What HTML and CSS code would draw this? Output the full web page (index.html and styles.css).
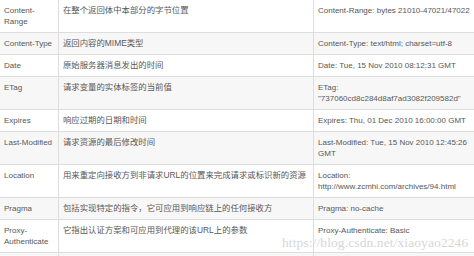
FILE: index.html
```html
<!DOCTYPE html>
<html lang="zh">
<head>
<meta charset="utf-8">
<link rel="stylesheet" href="styles.css">
</head>
<body>
<div class="table">
  <div class="row"><div class="c k">Content-Range</div><div class="c d">在整个返回体中本部分的字节位置</div><div class="c v">Content-Range: bytes 21010-47021/47022</div></div>
  <div class="row alt"><div class="c k">Content-Type</div><div class="c d">返回内容的MIME类型</div><div class="c v">Content-Type: text/html; charset=utf-8</div></div>
  <div class="row"><div class="c k">Date</div><div class="c d">原始服务器消息发出的时间</div><div class="c v">Date: Tue, 15 Nov 2010 08:12:31 GMT</div></div>
  <div class="row alt"><div class="c k">ETag</div><div class="c d">请求变量的实体标签的当前值</div><div class="c v">ETag: "737060cd8c284d8af7ad3082f209582d"</div></div>
  <div class="row"><div class="c k">Expires</div><div class="c d">响应过期的日期和时间</div><div class="c v">Expires: Thu, 01 Dec 2010 16:00:00 GMT</div></div>
  <div class="row alt"><div class="c k">Last-Modified</div><div class="c d">请求资源的最后修改时间</div><div class="c v">Last-Modified: Tue, 15 Nov 2010 12:45:26 GMT</div></div>
  <div class="row"><div class="c k">Location</div><div class="c d">用来重定向接收方到非请求URL的位置来完成请求或标识新的资源</div><div class="c v">Location: http://www.zcmhi.com/archives/94.html</div></div>
  <div class="row alt"><div class="c k">Pragma</div><div class="c d">包括实现特定的指令，它可应用到响应链上的任何接收方</div><div class="c v">Pragma: no-cache</div></div>
  <div class="row"><div class="c k">Proxy-Authenticate</div><div class="c d">它指出认证方案和可应用到代理的该URL上的参数</div><div class="c v">Proxy-Authenticate: Basic</div></div>
  <div class="row alt tail"><div class="c k"></div><div class="c d"></div><div class="c v"></div></div>
</div>
<div class="watermark">https://blog.csdn.net/xiaoyao2246</div>
</body>
</html>
```

FILE: styles.css
```css
html, body {
  margin: 0;
  padding: 0;
  background: #fff;
  overflow: hidden;
}
body {
  width: 474px;
  height: 256px;
  position: relative;
  font-family: "Liberation Sans", Arial, "Noto Sans CJK SC", sans-serif;
  font-size: 8px;
  line-height: 11px;
  color: #575757;
}
.table {
  display: flex;
  flex-direction: column;
}
.row {
  display: grid;
  grid-template-columns: 59px 255px 1fr;
  background: #fff;
}
.row.alt {
  background: #f7f7f7;
}
.c {
  padding: 5px 4px;
  border-bottom: 1px solid #dddddd;
  border-right: 1px solid #dddddd;
  min-width: 0;
  overflow-wrap: break-word;
}
.c.v {
  border-right: none;
}
.c.d {
  font-size: 8.4px;
}
.row.tail .c {
  padding: 0;
  height: 3px;
  border-bottom: none;
}
.watermark {
  position: absolute;
  left: 282px;
  top: 236px;
  font-family: "Liberation Serif", "Times New Roman", serif;
  font-size: 13.5px;
  line-height: 14px;
  color: #d6d6d6;
  letter-spacing: 0.1px;
  white-space: nowrap;
}
```
